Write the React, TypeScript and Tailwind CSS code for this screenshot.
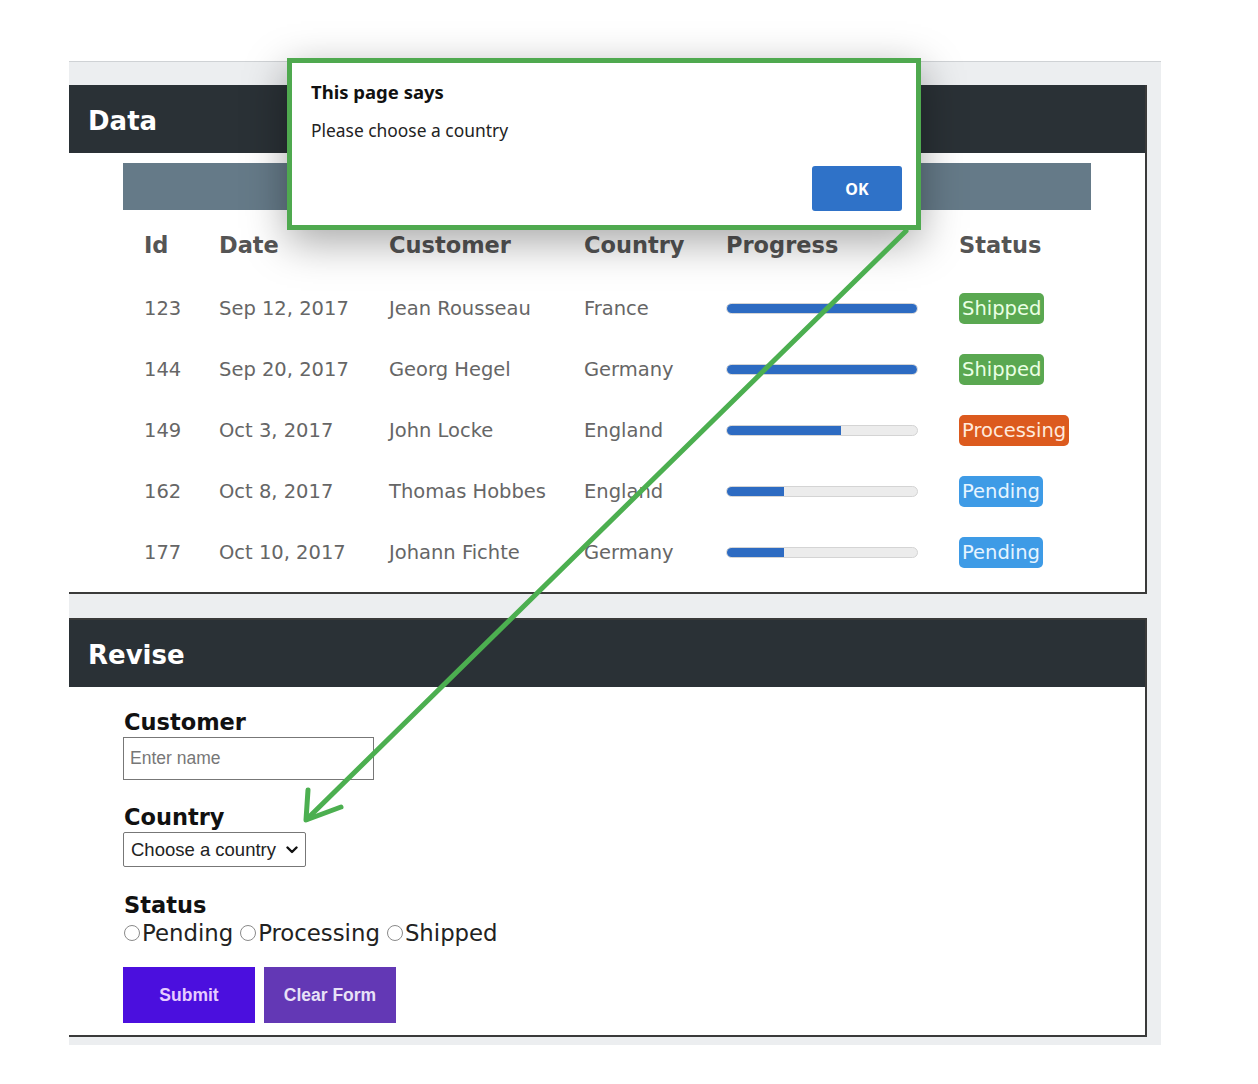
import React from "react";

interface OrderRow {
    id: number;
    date: string;
    customer: string;
    country: string;
    progress: number;
    status: "Shipped" | "Processing" | "Pending";
}

const orders: OrderRow[] = [
    { id: 123, date: "Sep 12, 2017", customer: "Jean Rousseau", country: "France", progress: 100, status: "Shipped" },
    { id: 144, date: "Sep 20, 2017", customer: "Georg Hegel", country: "Germany", progress: 100, status: "Shipped" },
    { id: 149, date: "Oct 3, 2017", customer: "John Locke", country: "England", progress: 60, status: "Processing" },
    { id: 162, date: "Oct 8, 2017", customer: "Thomas Hobbes", country: "England", progress: 30, status: "Pending" },
    { id: 177, date: "Oct 10, 2017", customer: "Johann Fichte", country: "Germany", progress: 30, status: "Pending" },
];

const badgeColor: Record<OrderRow["status"], string> = {
    Shipped: "bg-[#5aa851] text-[#eaffe4]",
    Processing: "bg-[#dc5a1e] text-[#ffe9dc]",
    Pending: "bg-[#3e9be6] text-[#e6f4ff]",
};

const cols = "grid grid-cols-[75px_170px_195px_142px_233px_1fr] items-center";

const ProgressBar = ({ value }: { value: number }) => (
    <div className="w-[192px] h-[11px] rounded-full bg-[#ececec] border border-[#d4d4d4] overflow-hidden">
        <div className="h-full bg-[#2d6bc2]" style={{ width: `${value}%` }} />
    </div>
);

const Radio = ({ label }: { label: string }) => (
    <span className="inline-flex items-center">
        <span className="inline-block w-[16px] h-[16px] rounded-full border border-[#8a8a8a] bg-white mr-[2px]" />
        {label}
    </span>
);

const App = () => {
    return (
        <div className="relative w-[1258px] h-[1084px] bg-white overflow-hidden font-['DejaVu_Sans',sans-serif]">
            {/* Page background */}
            <div className="ml-[69px] mt-[61px] w-[1092px] h-[984px] bg-[#eceef0] border-t border-[#cfd2d5] pt-[23px]">
                {/* Data card */}
                <div className="w-[1078px] h-[509px] bg-white border-r-2 border-b-2 border-[#3a3a3a]">
                    <div className="h-[68px] bg-[#2a3136] flex items-center pl-[19px] pt-[4px]">
                        <div className="text-white font-bold text-[26px]">Data</div>
                    </div>
                    <div className="ml-[54px] mr-[54px] mt-[10px]">
                        <div className="h-[47px] bg-[#657a88]" />
                        <div className="pl-[21px]">
                            <div className={`${cols} h-[68px] pt-[4px] text-[22.5px] font-bold text-[#555]`}>
                                <div>Id</div>
                                <div>Date</div>
                                <div>Customer</div>
                                <div>Country</div>
                                <div>Progress</div>
                                <div>Status</div>
                            </div>
                            {orders.map((item, itemIdx) => (
                                <div key={itemIdx} className={`${cols} h-[61px] text-[19.5px] text-[#666]`}>
                                    <div>{item.id}</div>
                                    <div>{item.date}</div>
                                    <div>{item.customer}</div>
                                    <div>{item.country}</div>
                                    <div><ProgressBar value={item.progress} /></div>
                                    <div>
                                        <span className={`inline-block rounded-[5px] px-[3px] leading-[31px] text-[19.5px] ${badgeColor[item.status]}`}>
                                            {item.status}
                                        </span>
                                    </div>
                                </div>
                            ))}
                        </div>
                    </div>
                </div>

                {/* Revise card */}
                <div className="mt-[24px] w-[1078px] h-[419px] bg-white border-t-2 border-r-2 border-b-2 border-[#3a3a3a]">
                    <div className="h-[67px] bg-[#2a3136] flex items-center pl-[19px] pt-[4px]">
                        <div className="text-white font-bold text-[26px]">Revise</div>
                    </div>
                    <div className="pl-[54px] pt-[21px] text-[#111]">
                        <div className="font-bold text-[22.5px] leading-[29px] pl-[1px]">Customer</div>
                        <div className="w-[251px] h-[43px] border border-[#777] flex items-center px-[6px] font-['Liberation_Sans',sans-serif] text-[17.5px] text-[#777]">
                            Enter name
                        </div>

                        <div className="mt-[23px] font-bold text-[22.5px] leading-[29px] pl-[1px]">Country</div>
                        <div className="w-[183px] h-[35px] border border-[#777] rounded-[2px] flex items-center justify-between pl-[7px] pr-[7px] font-['Liberation_Sans',sans-serif] text-[18.5px] text-[#222]">
                            <span>Choose a country</span>
                            <svg width="12" height="8" viewBox="0 0 12 8" fill="none">
                                <path d="M1.5 1.5 L6 6 L10.5 1.5" stroke="#111" strokeWidth="2.4" strokeLinecap="round" strokeLinejoin="round" />
                            </svg>
                        </div>

                        <div className="mt-[24px] font-bold text-[22.5px] leading-[28px] pl-[1px]">Status</div>
                        <div className="flex gap-[7px] text-[22.8px] leading-[28px] text-[#222] pl-[1px]">
                            <Radio label="Pending" />
                            <Radio label="Processing" />
                            <Radio label="Shipped" />
                        </div>

                        <div className="mt-[20px] flex gap-[9px] font-['Liberation_Sans',sans-serif] font-bold text-[17.5px]">
                            <button className="w-[132px] h-[56px] bg-[#4b0fde] text-[#e6ccff]">Submit</button>
                            <button className="w-[132px] h-[56px] bg-[#6338b5] text-[#e8e2f7]">Clear Form</button>
                        </div>
                    </div>
                </div>
            </div>

            {/* Alert dialog */}
            <div className="absolute left-[287px] top-[58px] w-[634px] h-[172px] bg-white border-[5px] border-[#4fa94f] shadow-[0_12px_40px_rgba(0,0,0,0.35)] font-['Noto_Sans',sans-serif]">
                <div className="pl-[19px] pt-[16px] text-[18.5px] font-bold text-[#111] leading-[25px]">This page says</div>
                <div className="pl-[19px] mt-[14px] text-[17.4px] text-[#222] leading-[24px]">Please choose a country</div>
                <div className="flex justify-end pr-[14px] mt-[24px]">
                    <button className="w-[90px] h-[45px] rounded-[3px] bg-[#2f72c8] text-white text-[16px] font-bold">OK</button>
                </div>
            </div>

            {/* Annotation arrow */}
            <svg className="absolute left-0 top-0 pointer-events-none" width="1258" height="1084" viewBox="0 0 1258 1084">
                <g stroke="#4caf50" strokeWidth="5" strokeLinecap="round" strokeLinejoin="round" fill="none">
                    <line x1="906" y1="231" x2="307" y2="819" />
                    <polyline points="308,790 306,820 341,807" />
                </g>
            </svg>
        </div>
    );
};

export default App;
